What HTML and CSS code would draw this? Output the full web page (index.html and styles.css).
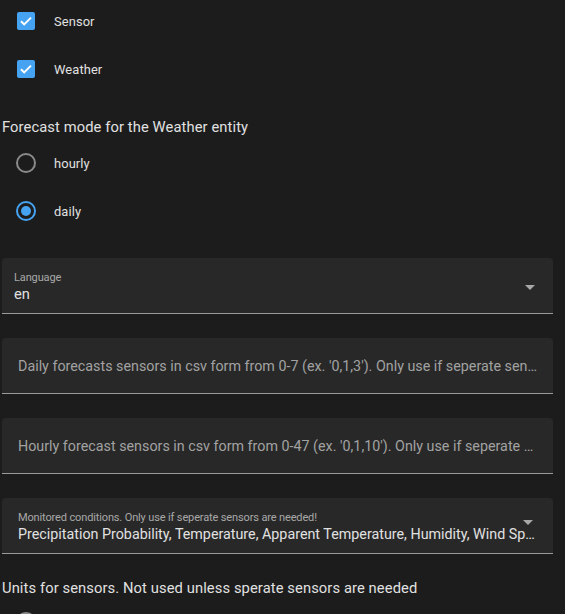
FILE: index.html
```html
<!DOCTYPE html>
<html>
<head>
<meta charset="utf-8">
<link rel="stylesheet" href="styles.css">
</head>
<body>
<div class="form">
  <div class="opts first">
    <label class="opt">
      <span class="cb"><svg viewBox="0 0 18 18" width="18" height="18"><path d="M4 9.2l3.2 3.2L14 5.6" fill="none" stroke="#fff" stroke-width="2"/></svg></span>
      <span class="opt-label">Sensor</span>
    </label>
    <label class="opt">
      <span class="cb"><svg viewBox="0 0 18 18" width="18" height="18"><path d="M4 9.2l3.2 3.2L14 5.6" fill="none" stroke="#fff" stroke-width="2"/></svg></span>
      <span class="opt-label">Weather</span>
    </label>
  </div>

  <div class="group-title">Forecast mode for the Weather entity</div>
  <div class="opts">
    <label class="opt ropt">
      <span class="radio"></span>
      <span class="opt-label">hourly</span>
    </label>
    <label class="opt ropt">
      <span class="radio checked"><span class="dot"></span></span>
      <span class="opt-label">daily</span>
    </label>
  </div>

  <div class="field select lang">
    <div class="field-body">
      <div class="flabel">Language</div>
      <div class="fvalue">en</div>
    </div>
    <span class="arrow"></span>
  </div>

  <div class="field text">
    <div class="placeholder">Daily forecasts sensors in csv form from 0-7 (ex. '0,1,3'). Only use if seperate sensors are needed!</div>
  </div>

  <div class="field text">
    <div class="placeholder">Hourly forecast sensors in csv form from 0-47 (ex. '0,1,10'). Only use if seperate sensors are needed!</div>
  </div>

  <div class="field select mon">
    <div class="field-body">
      <div class="flabel">Monitored conditions. Only use if seperate sensors are needed!</div>
      <div class="fvalue">Precipitation Probability, Temperature, Apparent Temperature, Humidity, Wind Speed, Wind Direction</div>
    </div>
    <span class="arrow"></span>
  </div>

  <div class="group-title units">Units for sensors. Not used unless sperate sensors are needed</div>
  <div class="opts">
    <label class="opt ropt">
      <span class="radio"></span>
      <span class="opt-label">auto</span>
    </label>
  </div>
</div>
</body>
</html>
```

FILE: styles.css
```css
html, body {
  margin: 0;
  padding: 0;
  background: #1c1c1c;
  height: 614px;
  overflow: hidden;
}
body {
  font-family: Roboto, "Noto Sans", sans-serif;
  color: #e1e1e1;
}
.form {
  width: 551px;
  padding: 0 0 0 2px;
}
.opts {
  display: flex;
  flex-direction: column;
}
.opts.first {
  margin-top: -3px;
}
.opt {
  display: flex;
  align-items: center;
  height: 48px;
  padding-left: 15px;
}
.opt.ropt {
  padding-left: 14px;
}
.cb {
  width: 18px;
  height: 18px;
  border-radius: 2px;
  background: #46a3f2;
  display: flex;
}
.radio {
  width: 16px;
  height: 16px;
  border: 2px solid #8a8a8a;
  border-radius: 50%;
  display: flex;
  align-items: center;
  justify-content: center;
}
.radio.checked {
  border-color: #46a3f2;
}
.radio .dot {
  width: 10px;
  height: 10px;
  border-radius: 50%;
  background: #46a3f2;
}
.opt-label {
  margin-left: 19px;
  font-size: 12.9px;
  letter-spacing: 0.1px;
  color: #e1e1e1;
}
.ropt .opt-label {
  margin-left: 18px;
}
.group-title {
  font-size: 14.72px;
  letter-spacing: 0.1px;
  color: #e1e1e1;
  margin: 24px 0 2px 0;
  line-height: 20px;
}
.field {
  position: relative;
  height: 55px;
  background: #282828;
  border-radius: 4px 4px 0 0;
  border-bottom: 1px solid #999999;
  margin-top: 24px;
  display: flex;
  align-items: center;
}
.field.lang {
  margin-top: 23px;
}
.field-body {
  flex: 1;
  min-width: 0;
  padding-top: 2px;
}
.lang .field-body {
  padding-left: 12px;
  padding-right: 40px;
}
.mon .field-body {
  padding-left: 16px;
  padding-right: 16px;
}
.flabel {
  font-size: 11.04px;
  color: #a8a8a8;
  line-height: 14px;
  white-space: nowrap;
  overflow: hidden;
  letter-spacing: -0.15px;
}
.fvalue {
  font-size: 14.3px;
  color: #e1e1e1;
  line-height: 18px;
  white-space: nowrap;
  overflow: hidden;
  text-overflow: ellipsis;
}
.lang .fvalue {
  font-size: 14.72px;
}
.placeholder {
  padding: 0 16px 0 16px;
  font-size: 14.3px;
  color: #a2a2a2;
  white-space: nowrap;
  overflow: hidden;
  text-overflow: ellipsis;
  min-width: 0;
  flex: 1;
}
.arrow {
  position: absolute;
  width: 0;
  height: 0;
  border-left: 5px solid transparent;
  border-right: 5px solid transparent;
  border-top: 5px solid #a8a8a8;
}
.lang .arrow {
  right: 18px;
  top: 27px;
}
.mon .arrow {
  right: 20px;
  top: 22px;
}
.group-title.units {
  margin-top: 24px;
  margin-bottom: 0;
}
```
